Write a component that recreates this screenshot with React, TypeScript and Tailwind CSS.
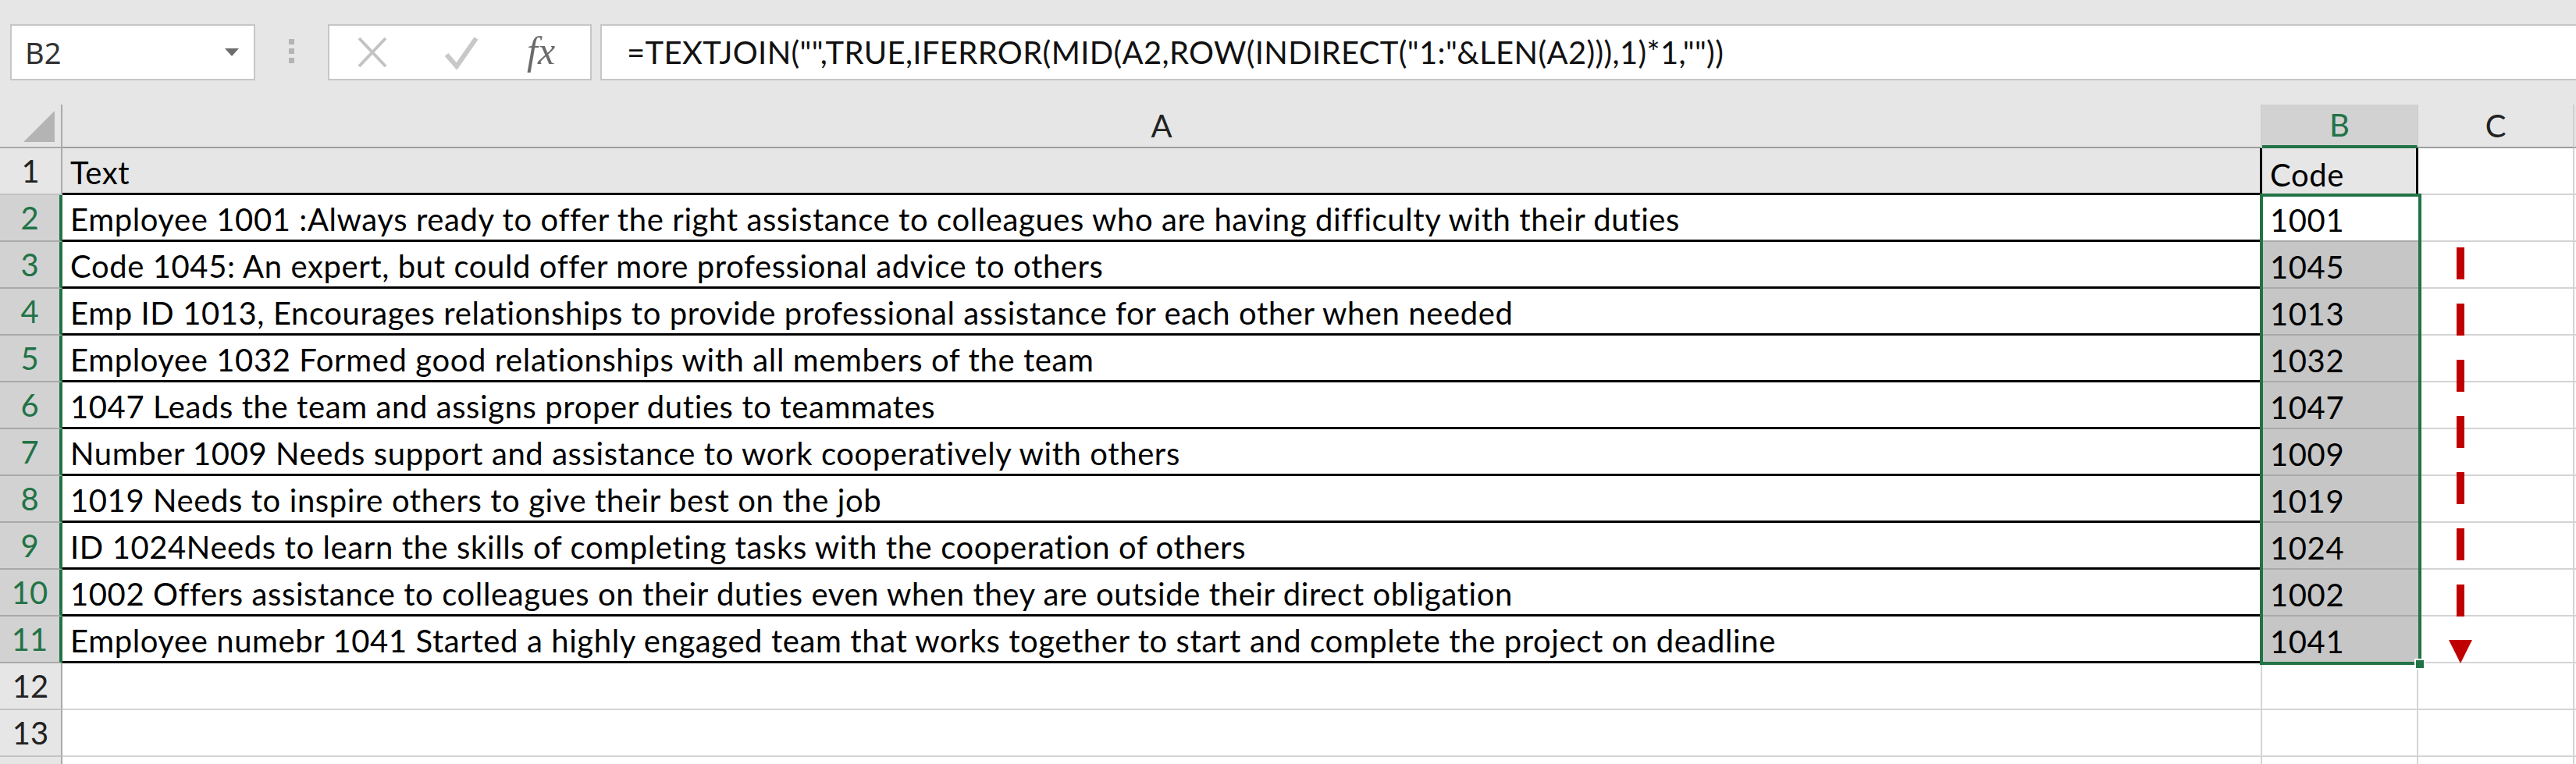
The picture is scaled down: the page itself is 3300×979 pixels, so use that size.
import React from 'react';

const rows = [
  { a: 'Text', b: 'Code' },
  { a: 'Employee 1001 :Always ready to offer the right assistance to colleagues who are having difficulty with their duties', b: '1001' },
  { a: 'Code 1045: An expert, but could offer more professional advice to others', b: '1045' },
  { a: 'Emp ID 1013, Encourages relationships to provide professional assistance for each other when needed', b: '1013' },
  { a: 'Employee 1032 Formed good relationships with all members of the team', b: '1032' },
  { a: '1047 Leads the team and assigns proper duties to teammates', b: '1047' },
  { a: 'Number 1009 Needs support and assistance to work cooperatively with others', b: '1009' },
  { a: '1019 Needs to inspire others to give their best on the job', b: '1019' },
  { a: 'ID 1024Needs to learn the skills of completing tasks with the cooperation of others', b: '1024' },
  { a: '1002 Offers assistance to colleagues on their duties even when they are outside their direct obligation', b: '1002' },
  { a: 'Employee numebr 1041 Started a highly engaged team that works together to start and complete the project on deadline', b: '1041' },
  { a: '', b: '' },
  { a: '', b: '' },
  { a: '', b: '' },
];

const Toolbar: React.FC = () => (
  <div className="h-[134px] flex items-start pt-[31px] pl-[13px]">
    {/* Name box */}
    <div className="w-[314px] h-[72px] shrink-0 bg-white border-2 border-[#c6c6c6] flex items-center pl-[17px] pr-[19px]">
      <span className="flex-1 text-[38px] text-[#333] font-['Noto_Sans',sans-serif] leading-none">B2</span>
      <svg width="18" height="10" viewBox="0 0 18 10"><path d="M0 0 H18 L9 10 Z" fill="#6d6d6d" /></svg>
    </div>
    {/* Grip */}
    <div className="ml-[43px] mt-[19px] flex flex-col gap-[5px]">
      <div className="w-[7px] h-[7px] bg-[#b4b4b4]" />
      <div className="w-[7px] h-[7px] bg-[#b4b4b4]" />
      <div className="w-[7px] h-[7px] bg-[#b4b4b4]" />
    </div>
    {/* Cancel / Enter / Function */}
    <div className="ml-[43px] w-[338px] h-[72px] shrink-0 bg-white border-2 border-[#c6c6c6] flex items-center">
      <svg className="ml-[35px]" width="40" height="42" viewBox="0 0 40 42">
        <path d="M3 3 L37 39 M37 3 L3 39" stroke="#c3c3c3" strokeWidth="4" fill="none" />
      </svg>
      <svg className="ml-[72px]" width="44" height="44" viewBox="0 0 44 44">
        <path d="M3 25 L16 40 L41 4" stroke="#c8c8c8" strokeWidth="6" fill="none" />
      </svg>
      <span className="ml-[62px] text-[50px] italic text-[#6b6b6b] font-['Liberation_Serif',serif] leading-none -mt-[4px]">fx</span>
    </div>
    {/* Formula */}
    <div className="ml-[11px] flex-1 h-[72px] bg-white border-y-2 border-l-2 border-[#c6c6c6] flex items-center pl-[32px]">
      <span className="text-[40px] tracking-[0.35px] text-[#111] leading-none whitespace-nowrap">=TEXTJOIN("",TRUE,IFERROR(MID(A2,ROW(INDIRECT("1:"&LEN(A2))),1)*1,""))</span>
    </div>
  </div>
);

const ColumnHeader: React.FC = () => (
  <div className="flex h-[56px]">
    <div className="w-[80px] shrink-0 border-r-2 border-b-2 border-[#a9a9a9] flex items-end justify-end pr-[8px] pb-[6px]">
      <svg width="40" height="40" viewBox="0 0 40 40"><path d="M40 0 V40 H0 Z" fill="#b4b4b4" /></svg>
    </div>
    <div className="w-[2818px] shrink-0 border-r-2 border-[#cfcfcf] border-b-2 border-b-[#9e9e9e] flex items-center justify-center text-[40px] text-[#222]">A</div>
    <div className="w-[200px] shrink-0 bg-[#d2d2d2] border-r-2 border-r-[#cfcfcf] border-b-[4px] border-b-[#217346] flex items-center justify-center text-[40px] text-[#217346]">B</div>
    <div className="w-[200px] shrink-0 border-r-2 border-[#cfcfcf] border-b-2 border-b-[#9e9e9e] flex items-center justify-center text-[40px] text-[#222]">C</div>
    <div className="flex-1 border-b-2 border-[#9e9e9e]" />
  </div>
);

const cellText = 'flex items-end pl-[10px] pb-[6px] text-[40px] leading-none tracking-[0.6px] text-black whitespace-nowrap';

const Sheet: React.FC = () => (
  <div className="relative">
    <ColumnHeader />
    {rows.map((r, i) => {
      const n = i + 1;
      const selected = n >= 2 && n <= 11;
      const bordered = n <= 11;
      return (
        <div key={n} className="flex h-[60px]">
          <div
            className={
              selected
                ? 'w-[80px] shrink-0 bg-[#d2d2d2] border-r-[4px] border-r-[#217346] border-b-2 border-b-[#a9a9a9] flex items-center justify-center text-[40px] text-[#217346]'
                : 'w-[80px] shrink-0 border-r-2 border-r-[#a9a9a9] border-b-2 border-b-[#c3c3c3] flex items-center justify-center text-[40px] text-[#222]'
            }
          >
            {n <= 13 ? n : ''}
          </div>
          <div
            className={
              n === 1
                ? `w-[2818px] shrink-0 bg-[#e7e6e6] border-r-[3px] border-b-[3px] border-black ${cellText}`
                : bordered
                ? `w-[2818px] shrink-0 bg-white border-r-[3px] border-b-[3px] border-black ${cellText}`
                : 'w-[2818px] shrink-0 bg-white border-r-2 border-b-2 border-[#d4d4d4]'
            }
          >
            {r.a}
          </div>
          <div
            className={
              n === 1
                ? `w-[200px] shrink-0 bg-[#e7e6e6] border-r-[3px] border-black ${cellText}`
                : n === 2
                ? `w-[200px] shrink-0 bg-white border-b-2 border-[#a9a9a9] ${cellText}`
                : selected
                ? `w-[200px] shrink-0 bg-[#c6c6c6] border-b-2 border-[#a9a9a9] ${cellText}`
                : 'w-[200px] shrink-0 bg-white border-r-2 border-b-2 border-[#d4d4d4]'
            }
          >
            {r.b}
          </div>
          <div className="w-[200px] shrink-0 bg-white border-r-2 border-b-2 border-[#d4d4d4]" />
          <div className="flex-1 bg-white border-b-2 border-[#d4d4d4]" />
        </div>
      );
    })}

    {/* Selection B2:B11 */}
    <div className="absolute left-[2895px] top-[114px] w-[207px] h-[604px] border-[4px] border-[#217346] pointer-events-none" />
    <div className="absolute left-[3093px] top-[710px] w-[14px] h-[14px] bg-[#217346] border-2 border-white" />

    {/* Red dashed arrow */}
    <div className="absolute left-[3147px] top-[183px] flex flex-col items-center gap-[31px]">
      {[0, 1, 2, 3, 4, 5, 6].map((k) => (
        <div key={k} className="w-[10px] h-[41px] bg-[#c00000]" />
      ))}
    </div>
    <svg className="absolute left-[3137px] top-[686px]" width="30" height="30" viewBox="0 0 30 30">
      <path d="M0 0 H30 L15 30 Z" fill="#c00000" />
    </svg>
  </div>
);

export default function App() {
  return (
    <div className="w-[3300px] h-[979px] overflow-hidden bg-[#e6e6e6] font-['Lato',sans-serif]">
      <Toolbar />
      <Sheet />
    </div>
  );
}
